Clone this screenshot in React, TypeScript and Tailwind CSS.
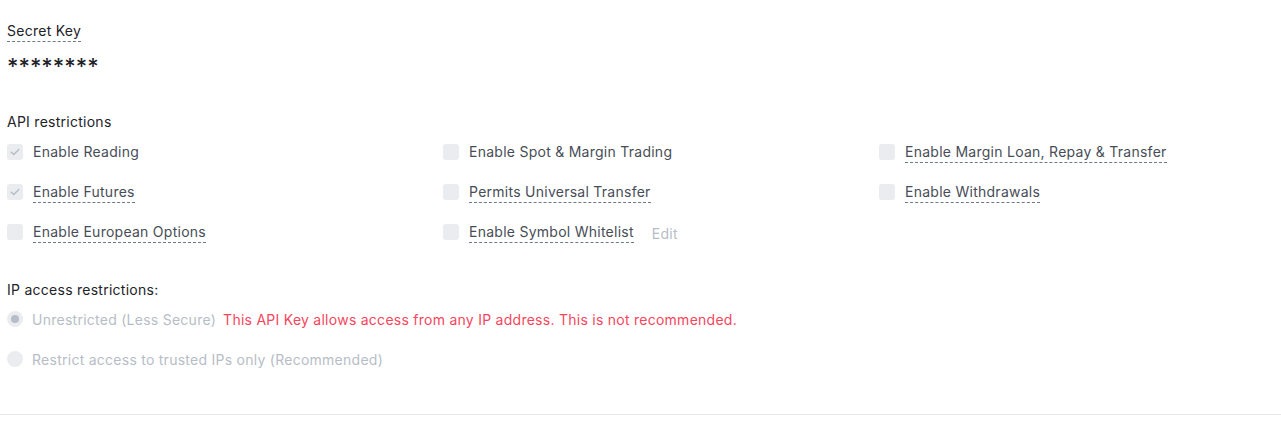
import React from "react";

type Perm = { label: string; checked?: boolean; dashed?: boolean; edit?: boolean };

const COLS: Perm[][] = [
  [
    { label: "Enable Reading", checked: true },
    { label: "Enable Futures", checked: true, dashed: true },
    { label: "Enable European Options", dashed: true },
  ],
  [
    { label: "Enable Spot & Margin Trading" },
    { label: "Permits Universal Transfer", dashed: true },
    { label: "Enable Symbol Whitelist", dashed: true, edit: true },
  ],
  [
    { label: "Enable Margin Loan, Repay & Transfer", dashed: true },
    { label: "Enable Withdrawals", dashed: true },
  ],
];

function CheckBox({ checked }: { checked?: boolean }) {
  return (
    <span className="flex h-4 w-4 shrink-0 items-center justify-center rounded-[3px] bg-[#eaecef]">
      {checked && (
        <svg width="12" height="12" viewBox="0 0 12 12" fill="none">
          <path d="M2.2 6.2 L4.8 8.6 L9.8 3.4" stroke="#b7bdc6" strokeWidth="1.4" strokeLinecap="round" strokeLinejoin="round" />
        </svg>
      )}
    </span>
  );
}

function PermItem({ p }: { p: Perm }) {
  return (
    <div className="flex h-5 items-center">
      <CheckBox checked={p.checked} />
      <span
        className={`ml-[10px] leading-5 text-[#474d57] ${
          p.dashed ? "border-b border-dashed border-[#6f7886]" : ""
        }`}
      >
        {p.label}
      </span>
      {p.edit && <span className="ml-[18px] mt-[3px] text-[#b7bdc6]">Edit</span>}
    </div>
  );
}

function Radio({ checked }: { checked?: boolean }) {
  return (
    <span className="flex h-4 w-4 shrink-0 items-center justify-center rounded-full bg-[#eaecef]">
      {checked && <span className="h-2 w-2 rounded-full bg-[#b7bdc6]" />}
    </span>
  );
}

export default function App() {
  return (
    <div
      className="flex h-[421px] w-[1281px] flex-col bg-white text-[14px] tracking-[0.26px]"
      style={{ fontFamily: "Inter, 'Noto Sans', Arial, sans-serif" }}
    >
      <div className="flex flex-col pl-[7px] pt-[20px]">
        {/* Secret key */}
        <div>
          <span className="inline-block border-b border-dashed border-[#6f7886] leading-5 text-[#1e2329]">
            Secret Key
          </span>
        </div>
        <div className="mt-[12px] h-6 text-[22px] font-medium leading-6 tracking-[0px] text-[#1e2329]">********</div>

        {/* API restrictions */}
        <div className="mt-[34px] leading-5 text-[#1e2329]">API restrictions</div>
        <div className="mt-[10px] grid grid-cols-[436px_436px_1fr]">
          {COLS.map((col, i) => (
            <div key={i} className="flex flex-col gap-5">
              {col.map((p) => (
                <PermItem key={p.label} p={p} />
              ))}
            </div>
          ))}
        </div>

        {/* IP access restrictions */}
        <div className="mt-[38px] leading-5 text-[#1e2329]">IP access restrictions:</div>
        <div className="mt-[9px] flex h-5 items-center">
          <Radio checked />
          <span className="ml-[9px] text-[#b7bdc6]">Unrestricted (Less Secure)</span>
          <span className="ml-[7px] text-[#f6465d]">This API Key allows access from any IP address. This is not recommended.</span>
        </div>
        <div className="mt-[20px] flex h-5 items-center">
          <Radio />
          <span className="ml-[9px] text-[#b7bdc6]">Restrict access to trusted IPs only (Recommended)</span>
        </div>
      </div>
      <div className="mt-[45px] border-b border-[#e6e8ea]" />
    </div>
  );
}
